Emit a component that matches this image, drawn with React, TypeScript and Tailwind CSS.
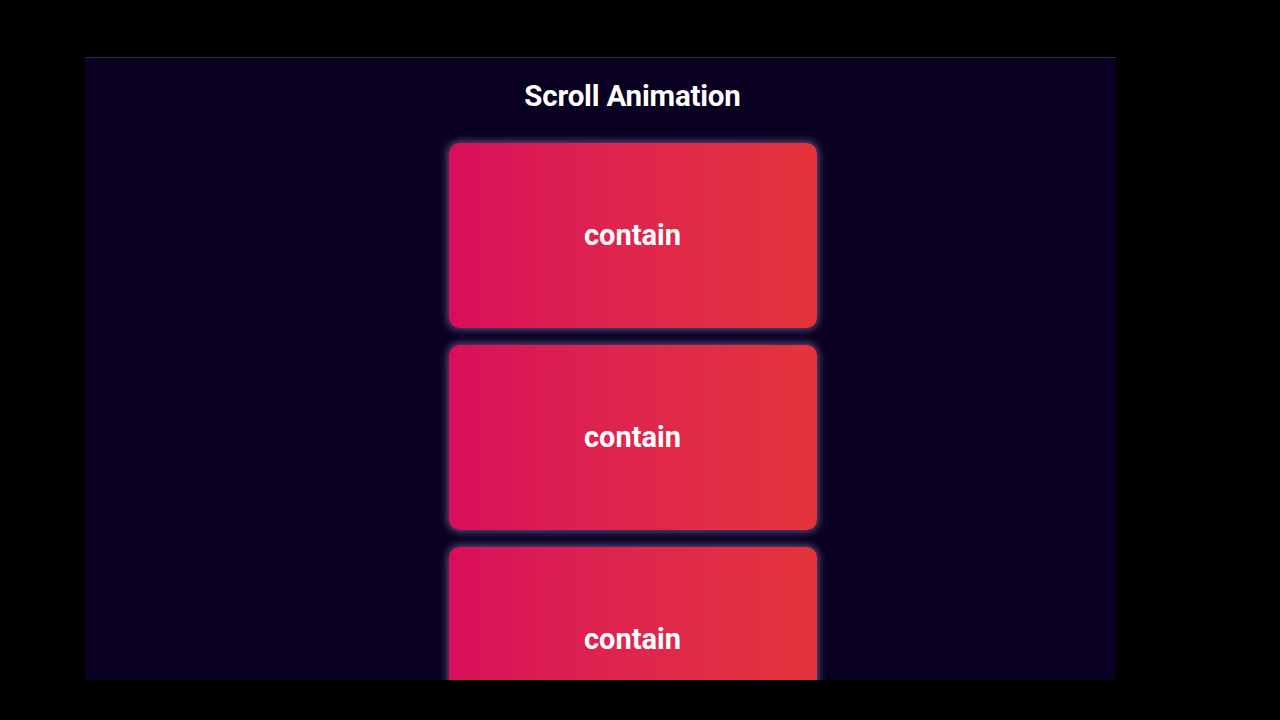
export default function App() {
  const cards = [0, 1, 2];
  return (
    <div className="w-[1280px] h-[720px] bg-black overflow-hidden" style={{ fontFamily: "Roboto, 'Liberation Sans', sans-serif" }}>
      <div className="ml-[85px] mt-[57px] w-[1031px] h-[623px] bg-[#0a0021] border-t border-[#3a2a40] overflow-hidden flex flex-col items-center pl-[64px]">
        <h1 className="mt-[18px] h-[40px] leading-[40px] text-[29.5px] font-bold text-white tracking-[-0.2px]">Scroll Animation</h1>
        <div className="mt-[27px] flex flex-col gap-[17px]">
          {cards.map((i) => (
            <div
              key={i}
              className="w-[368px] h-[185px] shrink-0 rounded-[10px] bg-gradient-to-r from-[#d90d5b] to-[#e4343a] shadow-[0_0_8px_1px_rgba(200,180,255,0.5)] flex items-center justify-center"
            >
              <span className="text-[29px] font-bold text-white">contain</span>
            </div>
          ))}
        </div>
      </div>
    </div>
  );
}
